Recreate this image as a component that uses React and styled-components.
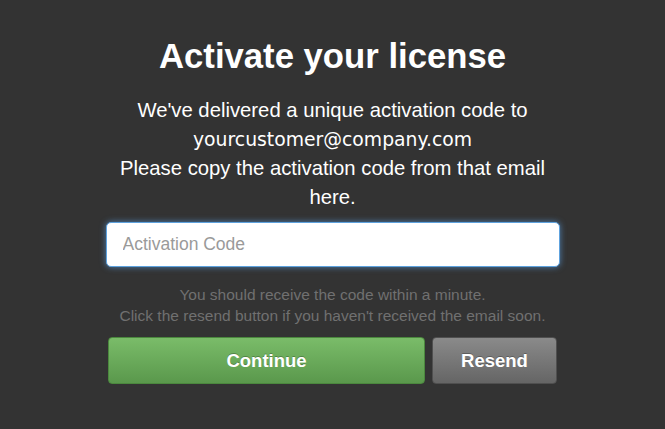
import React, { useState } from "react";
import styled, { createGlobalStyle } from "styled-components";

const GlobalStyle = createGlobalStyle`
  html, body {
    margin: 0;
    padding: 0;
    background: #333333;
  }
  body {
    font-family: "Liberation Sans", Arial, sans-serif;
  }
`;

const Page = styled.div`
  display: flex;
  flex-direction: column;
  align-items: center;
  padding-top: 36px;
  min-height: 429px;
  box-sizing: border-box;
`;

const Panel = styled.div`
  width: 454px;
  display: flex;
  flex-direction: column;
  align-items: center;
`;

const Title = styled.h1`
  margin: 0;
  font-size: 34.7px;
  line-height: 40px;
  font-weight: bold;
  color: #ffffff;
  text-align: center;
`;

const Message = styled.p`
  margin: 20px 0 0;
  font-size: 20.3px;
  line-height: 29px;
  color: #ffffff;
  text-align: center;
`;

const Email = styled.span`
  font-family: "DejaVu Sans", Verdana, sans-serif;
  font-size: 18.8px;
`;

const Input = styled.input`
  box-sizing: border-box;
  width: 454px;
  height: 45px;
  margin-top: 10px;
  padding: 0 16px;
  border: 1px solid #5ea2de;
  border-radius: 5px;
  background: #ffffff;
  box-shadow: 0 0 6px rgba(90, 160, 230, 0.7);
  font-family: "Liberation Sans", Arial, sans-serif;
  font-size: 17.5px;
  color: #333;
  outline: none;
  &::placeholder {
    color: #9a9a9a;
  }
`;

const Hint = styled.p`
  margin: 17px 0 0;
  font-size: 15.5px;
  line-height: 21px;
  color: #707070;
  text-align: center;
`;

const Actions = styled.div`
  width: 449px;
  margin-top: 11px;
  display: flex;
  gap: 7px;
`;

const Button = styled.button`
  box-sizing: border-box;
  height: 47px;
  flex: ${({ $primary }) => ($primary ? "1" : "0 0 125px")};
  border-radius: 4px;
  border: 1px solid ${({ $primary }) => ($primary ? "#4b883e" : "#4f4f4f")};
  background: ${({ $primary }) =>
    $primary
      ? "linear-gradient(to bottom, #7abc69, #5a984c)"
      : "linear-gradient(to bottom, #8a8a8a, #656565)"};
  color: #ffffff;
  font-family: "Liberation Sans", Arial, sans-serif;
  font-size: 18.5px;
  font-weight: bold;
  text-shadow: 0 -1px 0 rgba(0, 0, 0, 0.25);
  cursor: pointer;
`;

export default function App() {
  const [code, setCode] = useState("");

  return (
    <>
      <GlobalStyle />
      <Page>
        <Panel>
          <Title>Activate your license</Title>
          <Message>
            We've delivered a unique activation code to
            <br />
            <Email>yourcustomer@company.com</Email>
            <br />
            Please copy the activation code from that email here.
          </Message>
          <Input
            value={code}
            onChange={(e) => setCode(e.target.value)}
            placeholder="Activation Code"
          />
          <Hint>
            You should receive the code within a minute.
            <br />
            Click the resend button if you haven't received the email soon.
          </Hint>
          <Actions>
            <Button $primary>Continue</Button>
            <Button>Resend</Button>
          </Actions>
        </Panel>
      </Page>
    </>
  );
}
